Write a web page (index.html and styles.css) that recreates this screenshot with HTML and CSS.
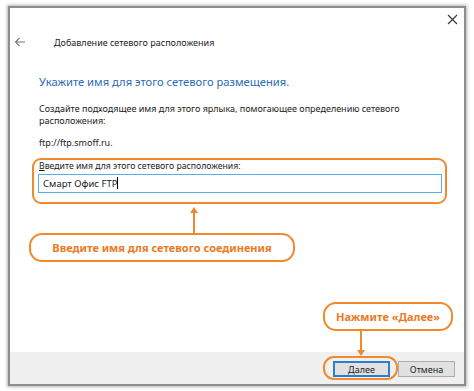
FILE: index.html
```html
<!DOCTYPE html>
<html lang="ru">
<head>
    <meta charset="UTF-8">
    <title>Добавление сетевого расположения</title>
    <link rel="stylesheet" href="styles.css">
</head>
<body>
    <div class="window">
        <div class="titlebar">
            <svg class="close" width="11" height="11" viewBox="0 0 11 11">
                <path d="M1 1 L10 10 M10 1 L1 10" stroke="#333" stroke-width="1.1" fill="none"/>
            </svg>
        </div>
        <div class="nav">
            <svg class="back" width="12" height="10" viewBox="0 0 12 10">
                <path d="M11 5 H1.5 M5.5 1 L1.5 5 L5.5 9" stroke="#777" stroke-width="1.1" fill="none"/>
            </svg>
            <span class="nav-title">Добавление сетевого расположения</span>
        </div>

        <div class="content">
            <h1 class="heading">Укажите имя для этого сетевого размещения.</h1>
            <p class="text">Создайте подходящее имя для этого ярлыка, помогающее определению сетевого расположения:</p>
            <p class="text ftp">ftp://ftp.smoff.ru.</p>

            <div class="field-box">
                <label class="field-label"><u>В</u>ведите имя для этого сетевого расположения:</label>
                <div class="input">Смарт Офис FTP<span class="caret"></span></div>
            </div>
        </div>

        <div class="footer">
            <span class="ring"><button class="btn btn-primary">Далее</button></span>
            <button class="btn">Отмена</button>
        </div>

        <!-- подсказки поверх окна -->
        <div class="arrow arrow-up"></div>
        <div class="callout callout-name">Введите имя для сетевого соединения</div>
        <div class="callout callout-next">Нажмите «Далее»</div>
        <div class="arrow arrow-down"></div>
    </div>
</body>
</html>
```

FILE: styles.css
```css
body {
    margin: 0;
    background: #fff;
    font-family: "Noto Sans", "Open Sans", sans-serif;
    color: #1b1b1b;
}
.window {
    position: relative;
    margin: 6px 8px;
    width: 454px;
    height: 376px;
    border: 2px solid #8d8d8d;
    box-shadow: 0 0 3px 1px rgba(0,0,0,0.3);
    background: #fff;
    display: flex;
    flex-direction: column;
}
.titlebar {
    height: 22px;
    display: flex;
    justify-content: flex-end;
    align-items: center;
    padding-right: 6px;
}
.nav {
    height: 24px;
    display: flex;
    align-items: center;
}
.back {
    margin-left: 4px;
}
.nav-title {
    margin-left: 28px;
    font-size: 9px;
    color: #222;
}
.content {
    padding-left: 29px;
    padding-right: 21px;
}
.heading {
    margin: 20px 0 0;
    font-size: 11.2px;
    line-height: 16px;
    font-weight: normal;
    color: #2b6cb8;
}
.text {
    margin: 13px 0 0;
    font-size: 9px;
    line-height: 12px;
}
.ftp {
    margin-top: 10px;
}
.field-box {
    margin: 9px 0 0 -7px;
    width: 404px;
    border: 2px solid #f08a2c;
    border-radius: 9px;
    padding: 0 3px 9px 4px;
}
.field-label {
    display: block;
    margin-left: 1px;
    font-size: 8.7px;
    line-height: 12px;
}
.input {
    margin-top: 2px;
    height: 17px;
    border: 1px solid #59aee6;
    padding-left: 4px;
    font-size: 9.5px;
    line-height: 17px;
}
.caret {
    display: inline-block;
    width: 0;
    height: 12px;
    border-left: 1px solid #000;
    vertical-align: -2px;
}
.footer {
    margin-top: auto;
    height: 32px;
    background: #f0f0f0;
    display: flex;
    justify-content: flex-end;
    align-items: flex-start;
    padding-right: 9px;
}
.ring {
    margin-top: 4px;
    display: flex;
    border: 2px solid #f08a2c;
    border-radius: 11px;
    padding: 3px 6px 1px 8px;
}
.btn {
    margin-top: 9px;
    width: 57px;
    height: 16px;
    padding: 0;
    border: 1px solid #adadad;
    background: #e1e1e1;
    font-family: "Noto Sans", "Open Sans", sans-serif;
    font-size: 9px;
    color: #1b1b1b;
}
.ring .btn {
    margin-top: 0;
}
.btn-primary {
    border: 2px solid #2b7fd0;
}
.callout {
    position: absolute;
    display: flex;
    align-items: center;
    justify-content: center;
    border: 2px solid #f08a2c;
    border-radius: 13px;
    background: #fff;
    color: #eb7a1f;
    font-weight: bold;
    font-size: 11px;
}
.callout-name {
    left: 19px;
    top: 225px;
    width: 262px;
    height: 25px;
}
.callout-next {
    left: 313px;
    top: 294px;
    width: 126px;
    height: 25px;
}
.arrow {
    position: absolute;
    width: 2px;
    background: #f08a2c;
}
.arrow::before {
    content: "";
    position: absolute;
    left: -3px;
    border-left: 4px solid transparent;
    border-right: 4px solid transparent;
}
.arrow-up {
    left: 183px;
    top: 202px;
    height: 23px;
}
.arrow-up::before {
    top: -3px;
    border-bottom: 6px solid #f08a2c;
}
.arrow-down {
    left: 350px;
    top: 323px;
    height: 23px;
}
.arrow-down::before {
    bottom: -2px;
    border-top: 6px solid #f08a2c;
}
```
